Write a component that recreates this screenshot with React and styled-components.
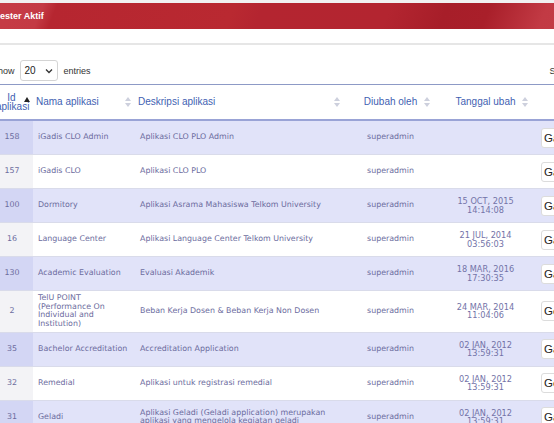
import React from 'react';
import styled, { createGlobalStyle } from 'styled-components';

const Global = createGlobalStyle`
  html, body {
    margin: 0;
    padding: 0;
    background: #ffffff;
    overflow: hidden;
  }
  #root {
    width: 554px;
    overflow: hidden;
  }
`;

const Page = styled.div`
  width: 700px;
  margin-left: -20px;
  font-family: "Liberation Sans", Arial, sans-serif;
`;

const TopStrip = styled.div`
  height: 3px;
  background: #f1f1f1;
`;

const RedBar = styled.div`
  height: 26px;
  display: flex;
  align-items: center;
  padding-left: 1px;
  background: linear-gradient(
    112deg,
    #c63c46 0%,
    #c43a44 9%,
    #b62630 11%,
    #b92931 36%,
    #b42530 40%,
    #b32530 58%,
    #a71e29 66%,
    #a91f2a 72%,
    #c23a44 80%,
    #c8434c 100%
  );
`;

const Title = styled.span`
  color: #ffffff;
  font-weight: bold;
  font-size: 9px;
`;

const Spacer = styled.div`
  height: 14px;
`;

const Divider = styled.div`
  height: 2px;
  background: #e6e6e6;
`;

const Content = styled.div`
  padding: 15px 0 0 12px;
`;

const Controls = styled.div`
  display: flex;
  align-items: center;
  height: 21px;
  margin-bottom: 3px;
  font-size: 9px;
  color: #333333;
`;

const LengthLabel = styled.label`
  display: flex;
  align-items: center;
  gap: 5px;
`;

const SelectBox = styled.div`
  width: 38px;
  height: 21px;
  box-sizing: border-box;
  border: 1px solid #d4d4d4;
  border-radius: 3px;
  display: flex;
  align-items: center;
  justify-content: space-between;
  padding: 0 4px 0 4px;
  font-size: 10px;
  color: #222;
  margin-right: 1px;
`;

const SearchLabel = styled.span`
  margin-left: 459px;
`;

const Table = styled.table`
  width: 623px;
  table-layout: fixed;
  border-collapse: collapse;
  border-top: 1px solid #8d9ac6;
`;

const Th = styled.th`
  position: relative;
  height: 34px;
  padding: 0 12px 0 ${p => (p.$center ? '12px' : '3px')};
  text-align: ${p => (p.$center ? 'center' : 'left')};
  font-weight: normal;
  font-size: 10px;
  line-height: 9.5px;
  color: #3f5fb2;
  border-bottom: 2px solid #99a3d6;
  vertical-align: middle;
`;

const IdHead = styled(Th)`
  padding: 0 6px 0 4px;
`;

const SortIcon = styled.svg`
  position: absolute;
  right: ${p => p.$right}px;
  top: 50%;
  margin-top: -5px;
`;

const SortedArrow = styled.span`
  position: absolute;
  right: 3px;
  top: 12px;
  width: 0;
  height: 0;
  border-left: 3px solid transparent;
  border-right: 3px solid transparent;
  border-bottom: 5px solid #222;
`;

const Tr = styled.tr`
  background: ${p => (p.$odd ? '#e1e3f9' : '#ffffff')};
  border-top: 1px solid #d9dbea;
`;

const Td = styled.td`
  padding: 3px 5px;
  vertical-align: middle;
  font-family: "DejaVu Sans", Verdana, sans-serif;
  font-size: 7.9px;
  line-height: 8.7px;
  color: #6c6c9e;
  text-align: ${p => (p.$center ? 'center' : 'left')};
`;

const IdCell = styled(Td)`
  background: ${p => (p.$odd ? '#d3d6f4' : '#f3f3f6')};
  text-align: center;
  padding-left: 4px;
`;

const DateCell = styled(Td)`
  text-align: center;
  color: #7373a8;
  font-size: 8.2px;
`;

const ActionCell = styled(Td)`
  padding-left: 6px;
`;

const SemesterButton = styled.button`
  display: block;
  height: 20px;
  margin: 3.5px 0;
  padding: 0 8px 0 2px;
  background: #ffffff;
  border: 1px solid #dcdcdc;
  border-radius: 3px;
  font-family: "Liberation Sans", Arial, sans-serif;
  font-size: 11.5px;
  color: #222;
  text-align: left;
  width: 74px;
`;

const Sort = ({ right }) => (
  <SortIcon $right={right} width="6" height="10" viewBox="0 0 6 10">
    <polygon points="3,0 6,4 0,4" fill="#cdd0dd" />
    <polygon points="0,6 6,6 3,10" fill="#cdd0dd" />
  </SortIcon>
);

const Chevron = () => (
  <svg width="8" height="6" viewBox="0 0 8 6">
    <polyline points="1,1.5 4,4.5 7,1.5" fill="none" stroke="#333" strokeWidth="1.3" />
  </svg>
);

const rows = [
  { id: 158, name: 'iGadis CLO Admin', desc: 'Aplikasi CLO PLO Admin', by: 'superadmin', date: null, sem: 'Ganjil' },
  { id: 157, name: 'iGadis CLO', desc: 'Aplikasi CLO PLO', by: 'superadmin', date: null, sem: 'Ganjil' },
  { id: 100, name: 'Dormitory', desc: 'Aplikasi Asrama Mahasiswa Telkom University', by: 'superadmin', date: ['15 OCT, 2015', '14:14:08'], sem: 'Ganjil' },
  { id: 16, name: 'Language Center', desc: 'Aplikasi Language Center Telkom University', by: 'superadmin', date: ['21 JUL, 2014', '03:56:03'], sem: 'Ganjil' },
  { id: 130, name: 'Academic Evaluation', desc: 'Evaluasi Akademik', by: 'superadmin', date: ['18 MAR, 2016', '17:30:35'], sem: 'Ganjil' },
  { id: 2, name: 'TelU POINT (Performance On Individual and Institution)', desc: 'Beban Kerja Dosen & Beban Kerja Non Dosen', by: 'superadmin', date: ['24 MAR, 2014', '11:04:06'], sem: 'Genap' },
  { id: 35, name: 'Bachelor Accreditation', desc: 'Accreditation Application', by: 'superadmin', date: ['02 JAN, 2012', '13:59:31'], sem: 'Ganjil' },
  { id: 32, name: 'Remedial', desc: 'Aplikasi untuk registrasi remedial', by: 'superadmin', date: ['02 JAN, 2012', '13:59:31'], sem: 'Genap' },
  { id: 31, name: 'Geladi', desc: 'Aplikasi Geladi (Geladi application) merupakan aplikasi yang mengelola kegiatan geladi', by: 'superadmin', date: ['02 JAN, 2012', '13:59:31'], sem: 'Ganjil' },
];

export default function App() {
  return (
    <Page>
      <Global />
      <TopStrip />
      <RedBar>
        <Title>Semester Aktif</Title>
      </RedBar>
      <Spacer />
      <Divider />
      <Content>
        <Controls>
          <LengthLabel>
            Show
            <SelectBox>
              20
              <Chevron />
            </SelectBox>
            entries
          </LengthLabel>
          <SearchLabel>Search:</SearchLabel>
        </Controls>
        <Table>
          <colgroup>
            <col style={{ width: 41 }} />
            <col style={{ width: 102 }} />
            <col style={{ width: 210 }} />
            <col style={{ width: 91 }} />
            <col style={{ width: 99 }} />
            <col style={{ width: 80 }} />
          </colgroup>
          <thead>
            <tr>
              <IdHead $center>
                Id
                <br />
                aplikasi
                <SortedArrow />
              </IdHead>
              <Th>
                Nama aplikasi
                <Sort right={4} />
              </Th>
              <Th>
                Deskripsi aplikasi
                <Sort right={5} />
              </Th>
              <Th $center>
                Diubah oleh
                <Sort right={6} />
              </Th>
              <Th $center>
                Tanggal ubah
                <Sort right={7} />
              </Th>
              <Th />
            </tr>
          </thead>
          <tbody>
            {rows.map((r, i) => {
              const odd = i % 2 === 0;
              return (
                <Tr key={r.id} $odd={odd}>
                  <IdCell $odd={odd}>{r.id}</IdCell>
                  <Td>{r.name}</Td>
                  <Td>{r.desc}</Td>
                  <Td $center>{r.by}</Td>
                  <DateCell>
                    {r.date && (
                      <>
                        {r.date[0]}
                        <br />
                        {r.date[1]}
                      </>
                    )}
                  </DateCell>
                  <ActionCell>
                    <SemesterButton>{r.sem}</SemesterButton>
                  </ActionCell>
                </Tr>
              );
            })}
          </tbody>
        </Table>
      </Content>
    </Page>
  );
}
